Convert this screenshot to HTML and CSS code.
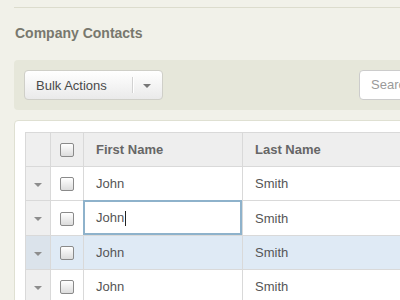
FILE: index.html
```html
<!DOCTYPE html>
<html>
<head>
<meta charset="utf-8">
<link rel="stylesheet" href="styles.css">
</head>
<body>
<div class="page">
  <div class="rule"></div>
  <h1 class="title">Company Contacts</h1>
  <div class="toolbar">
    <div class="bulk">
      <span class="bulk-label">Bulk Actions</span>
      <span class="bulk-sep"></span>
      <span class="bulk-arrow"></span>
    </div>
    <div class="search">Search</div>
  </div>
  <div class="panel">
    <table class="grid">
      <colgroup>
        <col class="c-arrow"><col class="c-check"><col class="c-first"><col class="c-last">
      </colgroup>
      <thead>
        <tr>
          <th class="arrow-cell"></th>
          <th class="check-cell"><span class="box"></span></th>
          <th>First Name</th>
          <th>Last Name</th>
        </tr>
      </thead>
      <tbody>
        <tr>
          <td class="arrow-cell"><span class="tri"></span></td>
          <td class="check-cell"><span class="box"></span></td>
          <td>John</td>
          <td>Smith</td>
        </tr>
        <tr>
          <td class="arrow-cell"><span class="tri"></span></td>
          <td class="check-cell"><span class="box"></span></td>
          <td class="editing"><span class="edit">John<span class="caret"></span></span></td>
          <td>Smith</td>
        </tr>
        <tr class="selected">
          <td class="arrow-cell"><span class="tri"></span></td>
          <td class="check-cell"><span class="box"></span></td>
          <td>John</td>
          <td>Smith</td>
        </tr>
        <tr>
          <td class="arrow-cell"><span class="tri"></span></td>
          <td class="check-cell"><span class="box"></span></td>
          <td>John</td>
          <td>Smith</td>
        </tr>
      </tbody>
    </table>
  </div>
</div>
</body>
</html>
```

FILE: styles.css
```css
html, body {
  margin: 0;
  padding: 0;
  background: #f1f1e9;
  overflow: hidden;
  width: 400px;
  height: 300px;
}
body {
  font-family: "Liberation Sans", Arial, sans-serif;
  font-size: 13px;
  color: #555;
}
.page {
  width: 640px;
  padding: 7px 0 0 14px;
}
.rule {
  height: 0;
  border-top: 1px solid #dcdccd;
}
.title {
  margin: 17px 0 0 1px;
  font-size: 14px;
  line-height: 16px;
  font-weight: bold;
  color: #78786e;
}
.toolbar {
  margin-top: 19px;
  height: 30px;
  padding: 10px;
  background: #e6e7da;
  border-radius: 4px 0 0 4px;
  display: flex;
  align-items: center;
}
.bulk {
  box-sizing: border-box;
  width: 139px;
  height: 30px;
  border: 1px solid #cfcfc8;
  border-radius: 4px;
  background: linear-gradient(#ffffff, #eaeaea);
  display: flex;
  align-items: center;
  padding-left: 11px;
}
.bulk-label {
  color: #4a4a4a;
  font-size: 13px;
  width: 96px;
}
.bulk-sep {
  width: 1px;
  height: 16px;
  background: #d2d2d2;
  box-shadow: 1px 0 0 #fff;
}
.bulk-arrow {
  margin-left: 10px;
  width: 0;
  height: 0;
  border-left: 4px solid transparent;
  border-right: 4px solid transparent;
  border-top: 4px solid #777;
  margin-top: 2px;
}
.search {
  box-sizing: border-box;
  margin-left: 196px;
  width: 160px;
  height: 30px;
  border: 1px solid #cccccc;
  border-radius: 4px;
  background: #fff;
  color: #9a9a9a;
  padding-left: 11px;
  line-height: 28px;
  font-size: 13px;
}
.panel {
  margin-top: 10px;
  background: #fff;
  border: 1px solid #dfe0d2;
  border-radius: 4px 0 0 0;
  padding: 11px 0 0 10px;
  height: 300px;
}
.grid {
  border-collapse: collapse;
  table-layout: fixed;
  width: 417px;
}
.c-arrow { width: 25px; }
.c-check { width: 33px; }
.c-first { width: 159px; }
.c-last { width: 200px; }
.grid th, .grid td {
  border: 1px solid #d9d9d9;
  height: 34px;
  padding: 0 0 0 12px;
  text-align: left;
  box-sizing: border-box;
}
.grid th {
  background: #eeeeee;
  color: #666;
  font-weight: bold;
  font-size: 13px;
}
.grid td {
  color: #555;
}
.grid .arrow-cell {
  background: #efefef;
  padding: 0;
  text-align: center;
}
.grid .check-cell {
  padding: 0;
  text-align: center;
}
.tri {
  display: inline-block;
  width: 0;
  height: 0;
  border-left: 4px solid transparent;
  border-right: 4px solid transparent;
  border-top: 4px solid #8d8d8d;
  vertical-align: middle;
}
.box {
  display: inline-block;
  box-sizing: border-box;
  width: 14px;
  height: 14px;
  border: 1px solid #8a8a8a;
  border-radius: 2px;
  background: linear-gradient(#ffffff, #dcdcdc);
  vertical-align: middle;
}
.selected td {
  background: #dfeaf5;
}
.selected td.arrow-cell {
  background: #dbe3eb;
}
.grid td.editing {
  padding: 0;
  position: relative;
}
.edit {
  display: block;
  box-sizing: border-box;
  height: 35px;
  margin: -1px 0 0 -1px;
  border: 2px solid #8eb2cb;
  padding-left: 11px;
  line-height: 31px;
  color: #555;
}
.caret {
  display: inline-block;
  width: 1px;
  height: 15px;
  background: #222;
  vertical-align: middle;
  margin-left: 1px;
}
```
